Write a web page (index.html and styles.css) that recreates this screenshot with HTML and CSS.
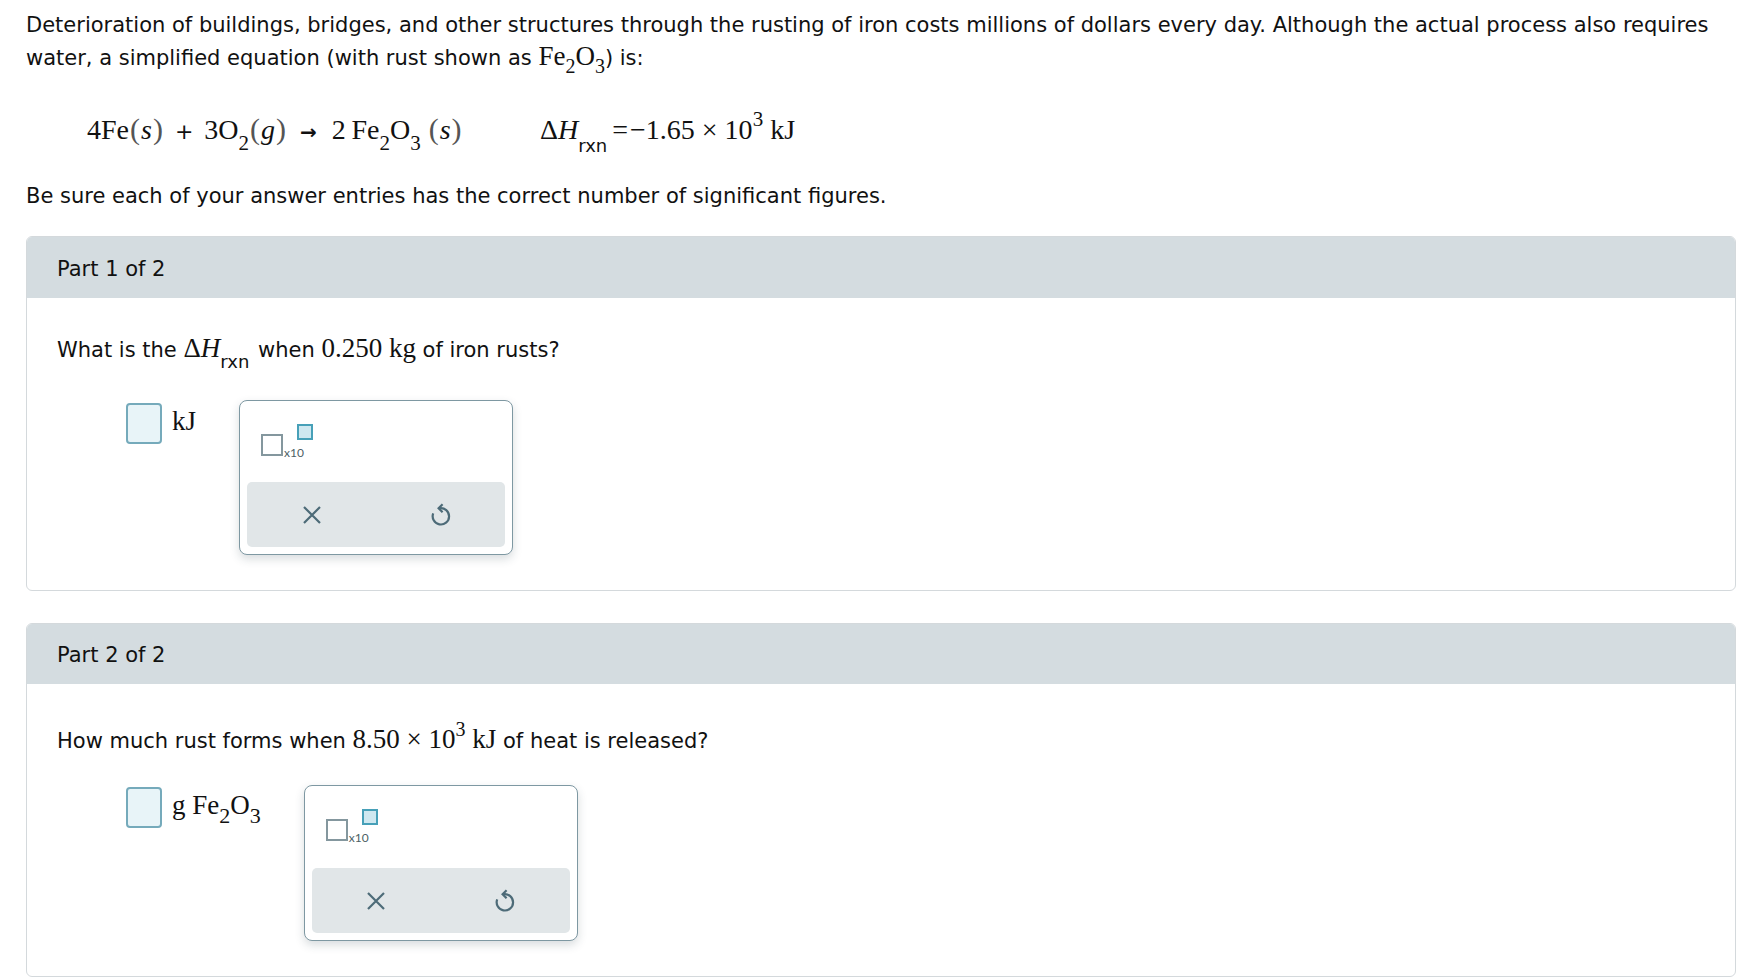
FILE: index.html
```html
<!DOCTYPE html>
<html>
<head>
<meta charset="utf-8">
<link rel="stylesheet" href="styles.css">
</head>
<body>
<main class="page">
  <p class="intro">Deterioration of buildings, bridges, and other structures through the rusting of iron costs millions of dollars every day. Although the actual process also requires water, a simplified equation (with rust shown as <span class="m">Fe<sub>2</sub>O<sub>3</sub></span>) is:</p>

  <div class="equation">
    <span class="m eq eq-left">4Fe<span class="par">(</span><i>s</i><span class="par">)</span> <span class="plus">+</span> 3O<sub>2</sub><span class="par">(</span><i>g</i><span class="par">)</span> <span class="arrow">&#x2192;</span> 2&#8201;Fe<sub>2</sub>O<sub>3</sub> <span class="par">(</span><i>s</i><span class="par">)</span></span>
    <span class="m eq eq-right">Δ<i>H</i><sub class="rxn">rxn</sub><span class="op">=</span>−1.65 × 10<sup>3</sup> kJ</span>
  </div>

  <p class="note">Be sure each of your answer entries has the correct number of significant figures.</p>

  <section class="card">
    <div class="card-head">Part 1 of 2</div>
    <div class="card-body">
      <p class="question">What is the <span class="m">Δ<i>H</i></span><sub class="rxn">rxn</sub> when <span class="m">0.250 kg</span> of iron rusts?</p>
      <div class="answer">
        <div class="field">
          <span class="input"></span>
          <span class="unit m">kJ</span>
        </div>
        <div class="popup">
          <div class="tpl">
            <span class="sq"></span><span class="x10">x10</span><span class="sup-sq"></span>
          </div>
          <div class="btnbar">
            <button class="btn" aria-label="clear">
              <svg width="20" height="20" viewBox="0 0 20 20"><path d="M2 2 L18 18 M18 2 L2 18" stroke="#4d6b78" stroke-width="2.2" fill="none"/></svg>
            </button>
            <button class="btn" aria-label="undo">
              <svg width="22" height="26" viewBox="0 0 22 26"><path d="M9.6 6.2 A8.2 8.2 0 1 1 3.2 11.4" stroke="#4d6b78" stroke-width="2.2" fill="none"/><path d="M12.6 2.2 L8.6 6.2 L12.6 10.2" stroke="#4d6b78" stroke-width="2.2" fill="none"/></svg>
            </button>
          </div>
        </div>
      </div>
    </div>
  </section>

  <section class="card card2">
    <div class="card-head">Part 2 of 2</div>
    <div class="card-body">
      <p class="question q2">How much rust forms when <span class="m">8.50 × 10<sup>3</sup> kJ</span> of heat is released?</p>
      <div class="answer">
        <div class="field">
          <span class="input"></span>
          <span class="unit m">g Fe<sub>2</sub>O<sub>3</sub></span>
        </div>
        <div class="popup">
          <div class="tpl">
            <span class="sq"></span><span class="x10">x10</span><span class="sup-sq"></span>
          </div>
          <div class="btnbar">
            <button class="btn" aria-label="clear">
              <svg width="20" height="20" viewBox="0 0 20 20"><path d="M2 2 L18 18 M18 2 L2 18" stroke="#4d6b78" stroke-width="2.2" fill="none"/></svg>
            </button>
            <button class="btn" aria-label="undo">
              <svg width="22" height="26" viewBox="0 0 22 26"><path d="M9.6 6.2 A8.2 8.2 0 1 1 3.2 11.4" stroke="#4d6b78" stroke-width="2.2" fill="none"/><path d="M12.6 2.2 L8.6 6.2 L12.6 10.2" stroke="#4d6b78" stroke-width="2.2" fill="none"/></svg>
            </button>
          </div>
        </div>
      </div>
    </div>
  </section>
</main>
</body>
</html>
```

FILE: styles.css
```css
* { box-sizing: border-box; }

html, body {
  margin: 0;
  padding: 0;
  background: #ffffff;
}

body {
  font-family: "DejaVu Sans", Verdana, sans-serif;
  font-size: 21px;
  color: #111;
}

.page {
  padding: 10px 9px 0 26px;
}

p { margin: 0; }

.m {
  font-family: "Liberation Serif", "Times New Roman", serif;
  font-size: 27px;
}

.m sub, .m sup {
  font-size: 20px;
  line-height: 0;
}

.m sub { vertical-align: -8px; }
.m sup { vertical-align: 12px; }

.intro {
  line-height: 31px;
}

.equation {
  display: flex;
  align-items: baseline;
  margin: 38px 0 0 61px;
  height: 46px;
}

.eq { font-size: 28px; }
.eq sub { font-size: 21px; vertical-align: -11px; }
.eq sup { font-size: 21px; vertical-align: 13px; }

.eq-left { width: 453px; }

.par { color: #555; font-size: 30px; padding: 0 1px; }

.plus {
  font-family: "DejaVu Sans", sans-serif;
  font-size: 22px;
  padding: 0 4px;
}

.arrow {
  font-family: "DejaVu Sans", sans-serif;
  font-size: 20px;
  font-weight: bold;
  padding: 0 8px 0 6px;
}

.op { padding: 0 2px 0 3px; }

sub.rxn {
  font-family: "DejaVu Sans", sans-serif;
  font-size: 18px;
  line-height: 0;
  vertical-align: -11px;
  margin-right: 2px;
}

.eq sub.rxn { font-size: 18px; vertical-align: -13px; }

.note {
  margin-top: 23px;
  line-height: 31px;
}

.card {
  margin-top: 24px;
  border: 1px solid #d4d9dc;
  border-radius: 6px;
  overflow: hidden;
}

.card2 { margin-top: 32px; }

.card-head {
  background: #d4dce0;
  height: 61px;
  display: flex;
  align-items: center;
  padding-left: 30px;
  padding-top: 2px;
}

.card2 .card-head { height: 60px; }

.card-body {
  padding: 35px 31px 35px 30px;
}

.question {
  line-height: 30px;
}

.q2 { line-height: 34px; margin-top: 3px; }

.answer {
  display: flex;
  align-items: flex-start;
  margin-top: 35px;
  padding-left: 69px;
}

.card2 .answer { margin-top: 27px; }

.field {
  display: flex;
  align-items: center;
  gap: 10px;
  margin-top: 3px;
}

.card2 .field { margin-top: 2px; }

.input {
  display: block;
  width: 36px;
  height: 41px;
  border: 2px solid #75aabb;
  border-radius: 4px;
  background: #e8f4f8;
}

.unit {
  font-size: 27px;
  margin-top: -4px;
}

.unit sub { font-size: 22px; vertical-align: -9px; }

.popup {
  margin-left: 43px;
  width: 274px;
  height: 155px;
  border: 1px solid #7e98a2;
  border-radius: 8px;
  background: #fff;
  box-shadow: 0 4px 10px rgba(40, 60, 70, 0.18);
  padding: 7px;
  display: flex;
  flex-direction: column;
  justify-content: space-between;
}

.card2 .popup { height: 156px; }

.tpl {
  display: flex;
  align-items: flex-start;
  padding: 16px 0 0 14px;
  height: 66px;
}

.sq {
  display: block;
  width: 22px;
  height: 22px;
  border: 2px solid #84979e;
  margin-top: 10px;
}

.x10 {
  font-family: "Lato", "DejaVu Sans", sans-serif;
  font-size: 12px;
  color: #4d5f66;
  margin-top: 21px;
  margin-left: 1px;
}

.sup-sq {
  display: block;
  width: 16px;
  height: 16px;
  border: 2px solid #47a0b8;
  background: #cfe8f0;
  margin-left: -7px;
}

.btnbar {
  display: flex;
  height: 65px;
  background: #e1e6e8;
  border-radius: 5px;
}

.btn {
  flex: 1;
  border: 0;
  background: transparent;
  display: flex;
  align-items: center;
  justify-content: center;
  padding: 0;
}

.btn svg { display: block; }
```
